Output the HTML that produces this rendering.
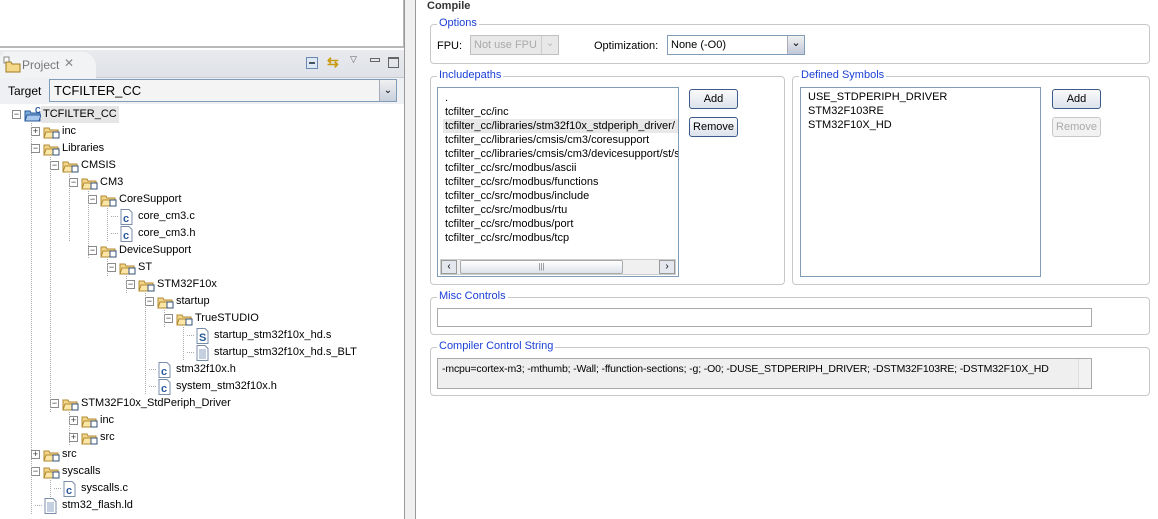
<!DOCTYPE html>
<html><head><meta charset="utf-8"><style>
*{box-sizing:border-box;margin:0;padding:0}
body{width:1158px;height:519px;overflow:hidden;background:#fff;font-family:"Liberation Sans",Tahoma,sans-serif;font-size:11px;color:#000;position:relative}
.a{position:absolute}
.row{position:absolute;height:17px;line-height:17px;white-space:nowrap}
.exp{position:absolute;width:9px;height:9px;border:1px solid #8a8a8a;background:#fff;font-size:9px;line-height:7px;text-align:center;color:#333}
.grp{position:absolute;border:1px solid #c8c8c8;border-radius:4px}
.grp>span{position:absolute;top:-8px;left:6px;background:#fff;color:#1a3fd6;padding:0 2px;font-size:11px}
.btn{position:absolute;width:49px;height:20px;border:1px solid #3c5a8a;border-radius:3px;background:linear-gradient(#fafafa,#dde3ec);text-align:center;line-height:18px;font-size:11px}
.list{position:absolute;border:1px solid #7f9db9;background:#fff;padding:2px 6px;line-height:14px}
</style></head><body>
<div class="a" style="left:0;top:0;width:404px;height:48px;border-bottom:2px solid #b8b8b8;border-right:1px solid #b8b8b8"></div>
<div class="a" style="left:0;top:50px;width:404px;height:28px;background:linear-gradient(#e8eaee,#dfe2e7);border-bottom:1px solid #c8ccd2"></div>
<div class="a" style="left:0;top:52px;width:96px;height:26px;background:#f2f3f5;border-radius:6px 14px 0 0"></div>
<svg class="a" style="left:3px;top:56px" width="18" height="17"><rect x="1" y="1" width="5" height="6" fill="#fff" stroke="#888"/><path d="M3 6h5l1 2h8v8H3z" fill="#f5d98b" stroke="#a07a20"/></svg>
<div class="a" style="left:22px;top:58px;color:#777;font-size:12px">Project</div>
<div class="a" style="left:64px;top:56px;color:#888;font-size:12px">✕</div>
<div class="a" style="left:306px;top:57px;width:12px;height:12px;border:1px solid #6a8ab5;background:#dfe8f5"><div style="margin:4px 2px;height:2px;background:#456"></div></div>
<div class="a" style="left:327px;top:54px;color:#c99a10;font-size:14px;font-weight:bold">⇆</div>
<div class="a" style="left:350px;top:54px;color:#666;font-size:9px">▽</div>
<div class="a" style="left:370px;top:58px;width:10px;height:4px;border:1px solid #666"></div>
<div class="a" style="left:388px;top:57px;width:11px;height:11px;border:1px solid #666;border-top-width:2px"></div>
<div class="a" style="left:0;top:78px;width:404px;height:26px;background:#eef0f3"></div>
<div class="a" style="left:8px;top:84px;font-size:12px">Target</div>
<div class="a" style="left:49px;top:79px;width:348px;height:23px;border:1px solid #7f9db9;background:#f4f4f4;font-size:13px;line-height:21px;padding-left:4px">TCFILTER_CC
<div style="position:absolute;right:0;top:0;width:17px;height:21px;background:linear-gradient(#f0f0f0,#c8d0dc);border-left:1px solid #aab;text-align:center;font-size:10px;line-height:21px">⌄</div></div>
<div class="a" style="left:404px;top:0;width:12px;height:519px;background:#f0f0f0;border-left:1px solid #999;border-right:1px solid #999"></div>

<div id="tree"></div>
<svg class="a" style="left:0;top:0" width="404" height="519" id="lines"></svg>

<div class="a" style="left:427px;top:0px;font-weight:bold;font-size:11px;color:#333">Compile</div>
<div class="grp" style="left:430px;top:24px;width:720px;height:40px"><span>Options</span></div>
<div class="a" style="left:437px;top:40px">FPU:</div>
<div class="a" style="left:470px;top:35px;width:89px;height:20px;border:1px solid #c0c0c0;background:#e8e8e8;color:#aaa;padding:3px 3px">Not use FPU<div style="position:absolute;right:0;top:0;width:17px;height:18px;border-left:1px solid #ccc;text-align:center;color:#bbb">⌄</div></div>
<div class="a" style="left:594px;top:40px">Optimization:</div>
<div class="a" style="left:667px;top:35px;width:138px;height:20px;border:1px solid #7f9db9;padding:3px 3px">None (-O0)<div style="position:absolute;right:0;top:0;width:17px;height:18px;background:linear-gradient(#f0f0f0,#c0c8d8);border-left:1px solid #aab;text-align:center">⌄</div></div>

<div class="grp" style="left:430px;top:76px;width:355px;height:209px"><span>Includepaths</span></div>
<div class="list" style="left:437px;top:87px;width:242px;height:190px;padding-top:3px;padding-left:7px;overflow:hidden">.<br>tcfilter_cc/inc<br><div style="background:#e8e8e8;margin-left:-2px;padding-left:2px;width:236px;white-space:nowrap;overflow:hidden">tcfilter_cc/libraries/stm32f10x_stdperiph_driver/</div><span style="white-space:nowrap">tcfilter_cc/libraries/cmsis/cm3/coresupport<br>tcfilter_cc/libraries/cmsis/cm3/devicesupport/st/s<br>tcfilter_cc/src/modbus/ascii<br>tcfilter_cc/src/modbus/functions<br>tcfilter_cc/src/modbus/include<br>tcfilter_cc/src/modbus/rtu<br>tcfilter_cc/src/modbus/port<br>tcfilter_cc/src/modbus/tcp</span>
<div style="position:absolute;left:2px;top:171px;width:236px;height:16px;background:#f0f0f0;border:1px solid #ccc">
<div style="position:absolute;left:0;top:0;width:16px;height:14px;border:1px solid #999;background:#e4e8ee;text-align:center;line-height:12px;font-size:10px">‹</div>
<div style="position:absolute;left:19px;top:0;width:163px;height:14px;border:1px solid #aaa;border-radius:2px;background:linear-gradient(#fff,#dde2ea);text-align:center;line-height:12px;font-size:8px;color:#777">|||</div>
<div style="position:absolute;right:0;top:0;width:16px;height:14px;border:1px solid #999;background:#e4e8ee;text-align:center;line-height:12px;font-size:10px">›</div></div></div>
<div class="btn" style="left:689px;top:89px">Add</div>
<div class="btn" style="left:689px;top:117px">Remove</div>

<div class="grp" style="left:792px;top:76px;width:358px;height:209px"><span>Defined Symbols</span></div>
<div class="list" style="left:800px;top:87px;width:241px;height:190px;padding-left:7px">USE_STDPERIPH_DRIVER<br>STM32F103RE<br>STM32F10X_HD</div>
<div class="btn" style="left:1052px;top:89px">Add</div>
<div class="btn" style="left:1052px;top:117px;border-color:#c8c8c8;background:#f2f2f2;color:#aaa">Remove</div>

<div class="grp" style="left:430px;top:297px;width:720px;height:38px"><span>Misc Controls</span></div>
<div class="a" style="left:437px;top:308px;width:655px;height:19px;border:1px solid #aaa"></div>
<div class="grp" style="left:430px;top:347px;width:720px;height:49px"><span>Compiler Control String</span></div>
<div class="a" style="left:437px;top:358px;width:655px;height:31px;border:1px solid #aaa;background:#efefef;padding:4px 4px;white-space:nowrap;overflow:hidden;font-size:10.5px;letter-spacing:-0.15px">-mcpu=cortex-m3; -mthumb; -Wall; -ffunction-sections; -g; -O0; -DUSE_STDPERIPH_DRIVER; -DSTM32F103RE; -DSTM32F10X_HD
<div style="position:absolute;right:0;top:0;width:13px;height:29px;background:#f2f2f2;border-left:1px solid #ddd"></div></div>

<script>
var rows=[[0,'TCFILTER_CC','p','-'],[1,'inc','f','+'],[1,'Libraries','f','-'],[2,'CMSIS','f','-'],[3,'CM3','f','-'],[4,'CoreSupport','f','-'],[5,'core_cm3.c','c'],[5,'core_cm3.h','c'],[4,'DeviceSupport','f','-'],[5,'ST','f','-'],[6,'STM32F10x','f','-'],[7,'startup','f','-'],[8,'TrueSTUDIO','f','-'],[9,'startup_stm32f10x_hd.s','s'],[9,'startup_stm32f10x_hd.s_BLT','t'],[7,'stm32f10x.h','c'],[7,'system_stm32f10x.h','c'],[2,'STM32F10x_StdPeriph_Driver','f','-'],[3,'inc','f','+'],[3,'src','f','+'],[1,'src','f','+'],[1,'syscalls','f','-'],[2,'syscalls.c','c'],[1,'stm32_flash.ld','t']];
var h='',L='',O=106;
rows.forEach(function(r,i){var y=O+i*17,lv=r[0],tx=43+19*lv,ix=tx-19;
 if(r[3])h+='<div class="exp" style="left:'+(ix-12)+'px;top:'+(y+4)+'px">'+(r[3]=='+'?'+':'−')+'</div>';
 else if(lv>0)L+='<line x1="'+(ix-8)+'" y1="'+(y+8.5)+'" x2="'+(ix-1)+'" y2="'+(y+8.5)+'" stroke="#aaa" stroke-dasharray="1 1"/>';
 var ic='';
 if(r[2]=='f')ic='<svg class="a" style="left:'+ix+'px;top:'+(y+2)+'px" width="18" height="14"><path d="M1 3h5l1 2h8v8H1z" fill="#f3d58a" stroke="#b08a30"/><path d="M3 7h13l-2 6H1z" fill="#fbe6a8" stroke="#b08a30"/><rect x="10" y="7" width="6" height="6" fill="#fff" stroke="#36507a"/></svg>';
 else if(r[2]=='p')ic='<svg class="a" style="left:'+ix+'px;top:'+y+'px" width="20" height="16"><path d="M1 5h5l1 2h9v8H1z" fill="#7aa8d8" stroke="#2a5a9a"/><path d="M3 9h14l-2 6H1z" fill="#a8c8ee" stroke="#2a5a9a"/><text x="11" y="7" font-size="8" font-weight="bold" fill="#2a5a9a" font-family="Liberation Sans">C</text></svg>';
 else ic='<svg class="a" style="left:'+(ix+1)+'px;top:'+(y+1)+'px" width="14" height="16"><path d="M1 .5h8l3 3v12H1z" fill="#fff" stroke="#7a8ca8"/>'+(r[2]=='t'?'<path d="M3 5h7M3 7h7M3 9h7M3 11h7M3 13h7" stroke="#8aa0c0"/>':'<text x="3" y="13" font-size="11" font-weight="bold" fill="#2a5a9a" font-family="Liberation Sans">'+(r[2]=='s'?'S':'c')+'</text>')+'</svg>';
 h+=ic+'<div class="row" style="left:'+tx+'px;top:'+y+'px;font-size:11px'+(i==0?';background:#e6e6e6;padding:0 2px;margin-left:-2px':'')+'">'+r[1]+'</div>';
});
function vl(x,y1,y2){L+='<line x1="'+x+'" y1="'+(y1+2)+'" x2="'+x+'" y2="'+(y2+2)+'" stroke="#aaa" stroke-dasharray="1 1"/>';}
vl(31.5,121,512);vl(50.5,155,410);vl(69.5,172,240);vl(88.5,189,257);vl(107.5,206,240);vl(107.5,257,274);vl(126.5,274,291);vl(145.5,291,393);vl(164.5,308,325);vl(183.5,325,359);vl(69.5,410,444);vl(50.5,478,495);
document.getElementById('tree').innerHTML=h;document.getElementById('lines').innerHTML=L;
</script>
</body></html>
